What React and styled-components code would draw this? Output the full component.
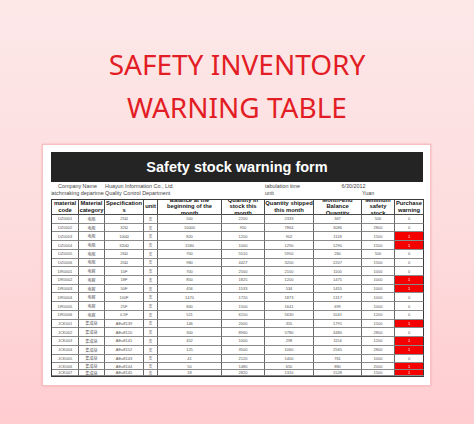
import React from 'react';
import styled, { createGlobalStyle } from 'styled-components';

const GlobalStyle = createGlobalStyle`
  html, body {
    margin: 0;
    padding: 0;
    background: #fde6e6;
  }
  * {
    box-sizing: border-box;
  }
`;

const COLUMNS = '27px 26px 39px 14px 64px 43px 49px 48px 33px 29px';

const Page = styled.div`
  width: 474px;
  height: 424px;
  overflow: hidden;
  background: linear-gradient(180deg, #fde8e8 0%, #fddcdd 55%, #ffccd0 100%);
  font-family: "Liberation Sans", Arial, sans-serif;
`;

const Title = styled.h1`
  margin: 0;
  padding-top: 43px;
  font-family: "Noto Sans", "Open Sans", sans-serif;
  font-size: 28px;
  font-weight: 400;
  line-height: 43px;
  color: #e31d25;
  text-align: center;
`;

const Sheet = styled.div`
  width: 389px;
  margin: 15px 0 0 42px;
  padding: 7px 6px 7.5px 8px;
  background: #fff;
  border: 1px solid #f6c0c2;
  box-shadow: 0 0 2px rgba(240, 140, 145, 0.6);
`;

const FormBar = styled.div`
  height: 30px;
  width: 372px;
  display: flex;
  align-items: center;
  justify-content: center;
  background: #242424;
  color: #fff;
  font-size: 14.5px;
  font-weight: 700;
`;

const Info = styled.div`
  display: grid;
  grid-template-columns: ${COLUMNS};
  grid-template-rows: 7.5px 7.5px;
  margin-bottom: 1.5px;
  font-size: 5.4px;
  color: #444;
`;

const InfoCell = styled.div`
  grid-column: ${(p) => p.$col};
  display: flex;
  align-items: center;
  justify-content: ${(p) => (p.$center ? 'center' : 'flex-start')};
  padding-left: ${(p) => (p.$center ? '0' : '1px')};
  overflow: hidden;
  white-space: nowrap;
  span {
    flex: none;
  }
`;

const Table = styled.div`
  display: grid;
  grid-template-columns: ${COLUMNS};
  grid-template-rows: 15.5px repeat(17, 8.72px) 6.7px 6.5px;
  width: 373px;
  border-left: 1px solid #3a3a3a;
  border-top: 1px solid #3a3a3a;
  border-bottom: 1px solid #3a3a3a;
`;

const HeadCell = styled.div`
  display: flex;
  align-items: center;
  justify-content: center;
  overflow: hidden;
  text-align: center;
  font-size: 5.8px;
  line-height: 6.8px;
  font-weight: 700;
  color: #151515;
  border-right: 1px solid #4a4a4a;
  border-bottom: 1px solid #4a4a4a;
  white-space: nowrap;
`;

const Cell = styled.div`
  display: flex;
  align-items: center;
  justify-content: center;
  overflow: hidden;
  font-size: 4px;
  color: ${(p) => (p.$warn ? '#fff' : '#555')};
  background: ${(p) => (p.$warn ? '#f40000' : 'transparent')};
  border-right: 1px solid ${(p) => (p.$last ? '#3a3a3a' : '#6a6a6a')};
  border-bottom: 1px solid #8a8a8a;
  white-space: nowrap;
`;

const headers = [
  ['material', 'code'],
  ['Material', 'category'],
  ['Specification', 's'],
  ['unit'],
  ['Balance at the', 'beginning of the', 'month'],
  ['Quantity in', 'stock this', 'month'],
  ['Quantity shipped', 'this month'],
  ['Month-End', 'Balance', 'Quantity'],
  ['Minimum', 'safety', 'stock'],
  ['Purchase', 'warning'],
];

const rows = [
  ['DZ0001', '电阻', '25Ω', '500', '2200', '2333', '367', '500', 0],
  ['DZ0002', '电阻', '32Ω', '10000', '950', '7864', '3086', '2800', 0],
  ['DZ0003', '电阻', '100Ω', '820', '1200', '902', '1118', '1500', 1],
  ['DZ0004', '电阻', '320Ω', '1580', '1000', '1290', '1290', '1500', 1],
  ['DZ0005', '电阻', '26Ω', '700', '5510', '5950', '260', '500', 0],
  ['DZ0006', '电阻', '20Ω', '980', '4427', '3200', '2207', '1500', 0],
  ['DR0001', '电容', '10F', '700', '2500', '2100', '1100', '1000', 0],
  ['DR0002', '电容', '18F', '850', '1825', '1200', '1475', '1000', 1],
  ['DR0003', '电容', '50F', '456', '1533', '534', '1455', '1000', 1],
  ['DR0004', '电容', '100F', '1470', '1720', '1873', '1317', '1000', 0],
  ['DR0005', '电容', '25F', '840', '1500', '1641', '699', '1000', 0],
  ['DR0006', '电容', '0.5F', '521', '6150', '5630', '1041', '1200', 0],
  ['JCK001', '集成块', 'AEu8139', '146', '2000', '355', '1791', '1500', 1],
  ['JCK002', '集成块', 'AEu8120', '300', '8960', '5780', '3480', '2800', 0],
  ['JCK003', '集成块', 'AEu8141', '452', '1000', '298', '1154', '1200', 1],
  ['JCK004', '集成块', 'AEu8152', '125', '3500', '1060', '2565', '2800', 1],
  ['JCK005', '集成块', 'AEu8143', '41', '2120', '1400', '761', '1000', 0],
  ['JCK006', '集成块', 'AEu8144', '50', '1480', '650', '880', '2000', 1],
  ['JCK007', '集成块', 'AEu8145', '18', '2820', '1310', '1528', '1500', 1],
];

const cjk = { fontFamily: '"Noto Sans CJK SC", sans-serif' };

export default function App() {
  return (
    <>
      <GlobalStyle />
      <Page>
        <Title>
          SAFETY INVENTORY
          <br />
          WARNING TABLE
        </Title>
        <Sheet>
          <FormBar>Safety stock warning form</FormBar>
          <Info>
            <InfoCell $col="1 / 3" $center><span>Company Name</span></InfoCell>
            <InfoCell $col="3 / 7"><span>Huayun Information Co., Ltd.</span></InfoCell>
            <InfoCell $col="7 / 8"><span>tabulation time</span></InfoCell>
            <InfoCell $col="8 / 10" $center><span>6/30/2012</span></InfoCell>
            <InfoCell $col="1 / 3" $center><span>Matchmaking department</span></InfoCell>
            <InfoCell $col="3 / 7"><span>Quality Control Department</span></InfoCell>
            <InfoCell $col="7 / 8"><span>unit</span></InfoCell>
            <InfoCell $col="9 / 10"><span>Yuan</span></InfoCell>
          </Info>
          <Table>
            {headers.map((lines, i) => (
              <HeadCell key={i}>
                <span>
                  {lines.map((l, j) => (
                    <React.Fragment key={j}>
                      {j > 0 && <br />}
                      {l}
                    </React.Fragment>
                  ))}
                </span>
              </HeadCell>
            ))}
            {rows.map((r) => (
              <React.Fragment key={r[0]}>
                <Cell>{r[0]}</Cell>
                <Cell style={cjk}>{r[1]}</Cell>
                <Cell>{r[2]}</Cell>
                <Cell style={cjk}>支</Cell>
                <Cell>{r[3]}</Cell>
                <Cell>{r[4]}</Cell>
                <Cell>{r[5]}</Cell>
                <Cell>{r[6]}</Cell>
                <Cell>{r[7]}</Cell>
                <Cell $warn={r[8] === 1} $last>{r[8]}</Cell>
              </React.Fragment>
            ))}
          </Table>
        </Sheet>
      </Page>
    </>
  );
}
